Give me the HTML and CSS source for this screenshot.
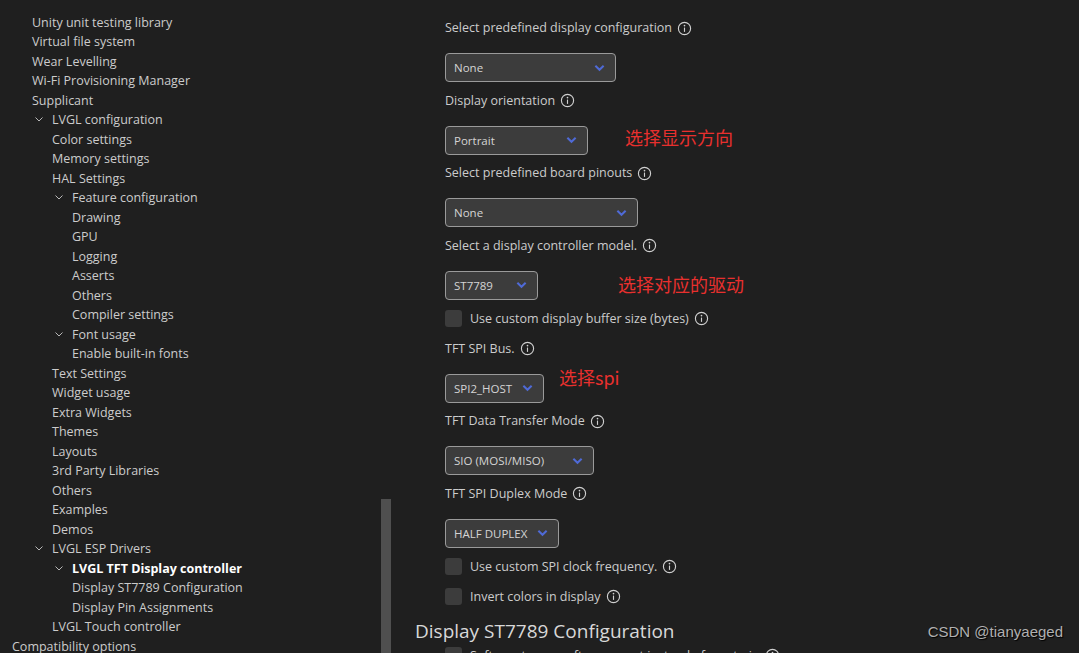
FILE: index.html
```html
<!DOCTYPE html>
<html lang="en">
<head>
    <meta charset="UTF-8">
    <meta name="viewport" content="width=device-width, initial-scale=1.0">
    <title>SDK Configuration Editor</title>
    <link rel="stylesheet" href="styles.css">
</head>
<body>
    <!-- Menu tree -->
    <nav class="tree">
        <div class="row d1">Unity unit testing library</div>
        <div class="row d1">Virtual file system</div>
        <div class="row d1">Wear Levelling</div>
        <div class="row d1">Wi-Fi Provisioning Manager</div>
        <div class="row d1">Supplicant</div>
        <div class="row d1"><span class="twistie"><svg viewBox="0 0 8 5"><path d="M.5.5 4 4 7.5.5"/></svg></span>LVGL configuration</div>
        <div class="row d2">Color settings</div>
        <div class="row d2">Memory settings</div>
        <div class="row d2">HAL Settings</div>
        <div class="row d2"><span class="twistie"><svg viewBox="0 0 8 5"><path d="M.5.5 4 4 7.5.5"/></svg></span>Feature configuration</div>
        <div class="row d3">Drawing</div>
        <div class="row d3">GPU</div>
        <div class="row d3">Logging</div>
        <div class="row d3">Asserts</div>
        <div class="row d3">Others</div>
        <div class="row d3">Compiler settings</div>
        <div class="row d2"><span class="twistie"><svg viewBox="0 0 8 5"><path d="M.5.5 4 4 7.5.5"/></svg></span>Font usage</div>
        <div class="row d3">Enable built-in fonts</div>
        <div class="row d2">Text Settings</div>
        <div class="row d2">Widget usage</div>
        <div class="row d2">Extra Widgets</div>
        <div class="row d2">Themes</div>
        <div class="row d2">Layouts</div>
        <div class="row d2">3rd Party Libraries</div>
        <div class="row d2">Others</div>
        <div class="row d2">Examples</div>
        <div class="row d2">Demos</div>
        <div class="row d1"><span class="twistie"><svg viewBox="0 0 8 5"><path d="M.5.5 4 4 7.5.5"/></svg></span>LVGL ESP Drivers</div>
        <div class="row d2 active"><span class="twistie"><svg viewBox="0 0 8 5"><path d="M.5.5 4 4 7.5.5"/></svg></span>LVGL TFT Display controller</div>
        <div class="row d3">Display ST7789 Configuration</div>
        <div class="row d3">Display Pin Assignments</div>
        <div class="row d2">LVGL Touch controller</div>
        <div class="row d0">Compatibility options</div>
        <div class="scrollbar"></div>
    </nav>

    <!-- Settings for the selected menu -->
    <main class="panel">
        <div class="settings">
            <div class="setting">
                <div class="label">Select predefined display configuration <svg class="info" viewBox="0 0 16 16"><circle cx="8" cy="8" r="6.5"/><path d="M8 7v4.6"/><circle class="dot" cx="8" cy="4.9" r=".9"/></svg></div>
                <div class="select w-none1"><span>None</span><svg class="chevron" viewBox="0 0 12 8"><path d="M1.5 1.5 6 6l4.5-4.5"/></svg></div>
            </div>
            <div class="setting">
                <div class="label">Display orientation <svg class="info" viewBox="0 0 16 16"><circle cx="8" cy="8" r="6.5"/><path d="M8 7v4.6"/><circle class="dot" cx="8" cy="4.9" r=".9"/></svg></div>
                <div class="control">
                    <div class="select w-portrait"><span>Portrait</span><svg class="chevron" viewBox="0 0 12 8"><path d="M1.5 1.5 6 6l4.5-4.5"/></svg></div>
                    <span class="note">选择显示方向</span>
                </div>
            </div>
            <div class="setting">
                <div class="label">Select predefined board pinouts <svg class="info" viewBox="0 0 16 16"><circle cx="8" cy="8" r="6.5"/><path d="M8 7v4.6"/><circle class="dot" cx="8" cy="4.9" r=".9"/></svg></div>
                <div class="select w-none2"><span>None</span><svg class="chevron" viewBox="0 0 12 8"><path d="M1.5 1.5 6 6l4.5-4.5"/></svg></div>
            </div>
            <div class="setting">
                <div class="label">Select a display controller model. <svg class="info" viewBox="0 0 16 16"><circle cx="8" cy="8" r="6.5"/><path d="M8 7v4.6"/><circle class="dot" cx="8" cy="4.9" r=".9"/></svg></div>
                <div class="control">
                    <div class="select w-st"><span>ST7789</span><svg class="chevron" viewBox="0 0 12 8"><path d="M1.5 1.5 6 6l4.5-4.5"/></svg></div>
                    <span class="note note-driver">选择对应的驱动</span>
                </div>
            </div>
            <div class="check">
                <span class="box"></span>Use custom display buffer size (bytes) <svg class="info" viewBox="0 0 16 16"><circle cx="8" cy="8" r="6.5"/><path d="M8 7v4.6"/><circle class="dot" cx="8" cy="4.9" r=".9"/></svg>
            </div>
            <div class="setting">
                <div class="label">TFT SPI Bus. <svg class="info" viewBox="0 0 16 16"><circle cx="8" cy="8" r="6.5"/><path d="M8 7v4.6"/><circle class="dot" cx="8" cy="4.9" r=".9"/></svg></div>
                <div class="control">
                    <div class="select w-spi"><span>SPI2_HOST</span><svg class="chevron" viewBox="0 0 12 8"><path d="M1.5 1.5 6 6l4.5-4.5"/></svg></div>
                    <span class="note note-spi">选择spi</span>
                </div>
            </div>
            <div class="setting">
                <div class="label">TFT Data Transfer Mode <svg class="info" viewBox="0 0 16 16"><circle cx="8" cy="8" r="6.5"/><path d="M8 7v4.6"/><circle class="dot" cx="8" cy="4.9" r=".9"/></svg></div>
                <div class="select w-sio"><span>SIO (MOSI/MISO)</span><svg class="chevron" viewBox="0 0 12 8"><path d="M1.5 1.5 6 6l4.5-4.5"/></svg></div>
            </div>
            <div class="setting">
                <div class="label">TFT SPI Duplex Mode <svg class="info" viewBox="0 0 16 16"><circle cx="8" cy="8" r="6.5"/><path d="M8 7v4.6"/><circle class="dot" cx="8" cy="4.9" r=".9"/></svg></div>
                <div class="select w-duplex"><span>HALF DUPLEX</span><svg class="chevron" viewBox="0 0 12 8"><path d="M1.5 1.5 6 6l4.5-4.5"/></svg></div>
            </div>
            <div class="check">
                <span class="box"></span>Use custom SPI clock frequency. <svg class="info" viewBox="0 0 16 16"><circle cx="8" cy="8" r="6.5"/><path d="M8 7v4.6"/><circle class="dot" cx="8" cy="4.9" r=".9"/></svg>
            </div>
            <div class="check">
                <span class="box"></span>Invert colors in display <svg class="info" viewBox="0 0 16 16"><circle cx="8" cy="8" r="6.5"/><path d="M8 7v4.6"/><circle class="dot" cx="8" cy="4.9" r=".9"/></svg>
            </div>
        </div>

        <h2 class="section">Display ST7789 Configuration</h2>
        <div class="settings">
            <div class="check">
                <span class="box"></span>Soft reset - use software reset instead of reset pin <svg class="info" viewBox="0 0 16 16"><circle cx="8" cy="8" r="6.5"/><path d="M8 7v4.6"/><circle class="dot" cx="8" cy="4.9" r=".9"/></svg>
            </div>
        </div>
    </main>

    <div class="watermark">CSDN @tianyaeged</div>
</body>
</html>
```

FILE: styles.css
```css
body {
    margin: 0;
    height: 653px;
    overflow: hidden;
    display: flex;
    background-color: #1f1f1f;
    color: #cccccc;
    font-family: "Open Sans", "Noto Sans", sans-serif;
    font-size: 12.5px;
}

/* ---- tree ---- */
.tree {
    position: relative;
    width: 391px;
    flex-shrink: 0;
    padding-top: 12.5px;
}
.row {
    height: 19.5px;
    line-height: 19.5px;
    white-space: nowrap;
    display: flex;
    align-items: center;
}
.d0 { padding-left: 12px; }
.d1 { padding-left: 32px; }
.d2 { padding-left: 52px; }
.d3 { padding-left: 72px; }
.row .twistie {
    width: 20px;
    flex-shrink: 0;
    display: flex;
    align-items: center;
}
.twistie svg {
    width: 8px;
    height: 5px;
    margin-left: 3px;
    fill: none;
    stroke: #b8b8b8;
    stroke-width: 1;
}
.row.active {
    font-weight: 700;
    color: #ffffff;
}
.scrollbar {
    position: absolute;
    left: 381px;
    top: 499px;
    width: 10px;
    bottom: 0;
    background-color: #4f4f4f;
}

/* ---- settings panel ---- */
.panel {
    flex: 1;
    padding-left: 24px;
    padding-top: 18px;
}
.settings {
    padding-left: 30px;
}
.setting {
    margin-bottom: 8.5px;
}
.label {
    height: 20px;
    line-height: 20px;
    display: flex;
    align-items: center;
    white-space: nowrap;
}
.info {
    width: 15px;
    height: 15px;
    margin-left: 5px;
    fill: none;
    stroke: #d0d0d0;
    stroke-width: 1.2;
}
.info .dot {
    fill: #d0d0d0;
    stroke: none;
}
.control {
    display: flex;
    align-items: flex-start;
}
.select {
    margin-top: 15px;
    box-sizing: border-box;
    height: 29px;
    padding: 0 10px 0 8px;
    display: flex;
    align-items: center;
    justify-content: space-between;
    background-color: #3c3c3c;
    border: 1px solid #9a9a9a;
    border-radius: 4px;
    font-size: 11.5px;
    color: #d4d4d4;
}
.w-none1 { width: 171px; }
.w-portrait { width: 143px; }
.w-none2 { width: 193px; }
.w-st { width: 93px; }
.w-spi { width: 99px; }
.w-sio { width: 149px; }
.w-duplex { width: 114px; }
.chevron {
    width: 11px;
    height: 8px;
    fill: none;
    stroke: #4f6ad6;
    stroke-width: 2.2;
}
.note {
    margin-top: 16px;
    margin-left: 37px;
    color: #e8302e;
    font-family: "Noto Sans CJK SC", sans-serif;
    font-size: 18px;
    line-height: 20px;
    white-space: nowrap;
}
.note-driver { margin-left: 80px; margin-top: 18px; }
.note-spi { margin-left: 15px; margin-top: 8px; }

.check {
    height: 20px;
    margin-bottom: 10.5px;
    display: flex;
    align-items: center;
    white-space: nowrap;
}
.box {
    width: 17px;
    height: 17px;
    flex-shrink: 0;
    margin-right: 8px;
    border-radius: 3px;
    background-color: #3c3c3c;
}

.section {
    margin: 0;
    font-size: 19px;
    font-weight: 400;
    line-height: 28px;
    color: #d8d8d8;
}

.watermark {
    position: absolute;
    right: 16px;
    top: 623px;
    font-family: "Liberation Sans", Arial, sans-serif;
    font-size: 15px;
    color: #b0b0b0;
    text-shadow: 1px 1px 1px #000000;
}
```
